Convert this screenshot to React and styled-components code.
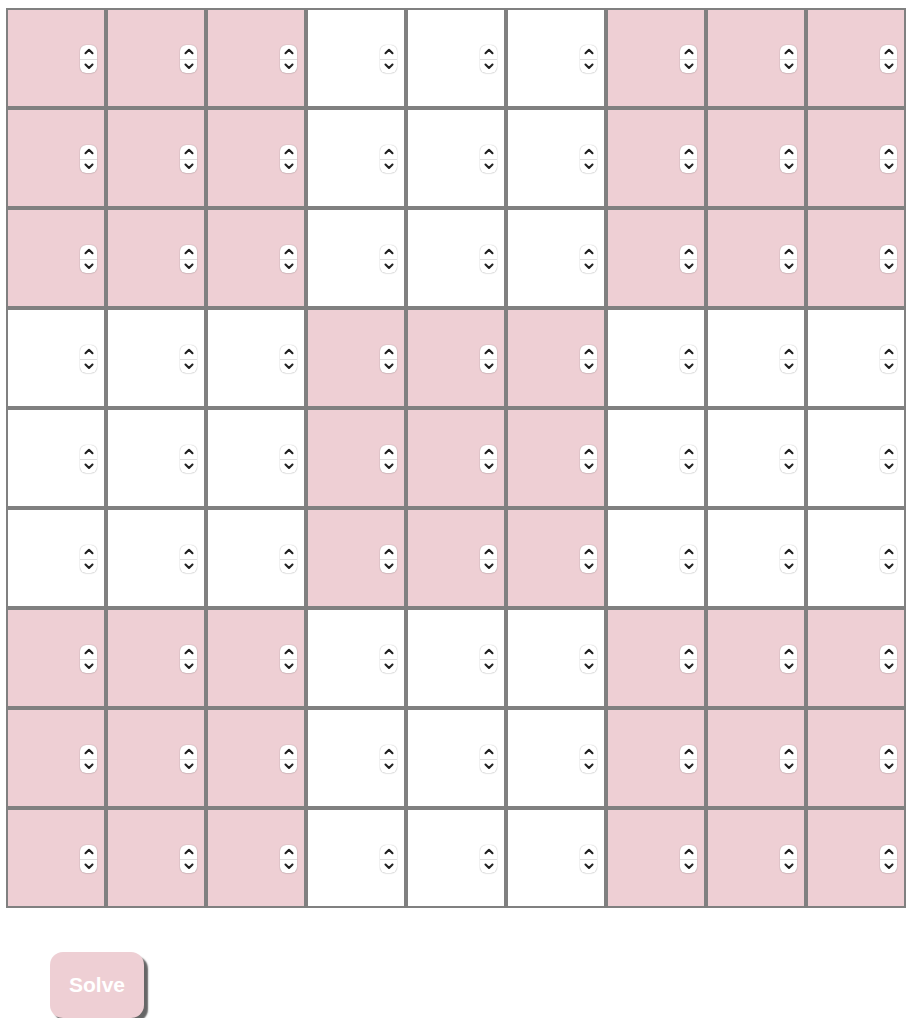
import React from "react";
import styled, { createGlobalStyle } from "styled-components";

const GlobalStyle = createGlobalStyle`
  html, body { margin: 0; padding: 0; background: #ffffff; }
  body { font-family: "Liberation Sans", Arial, sans-serif; }
  input[type=number]::-webkit-inner-spin-button,
  input[type=number]::-webkit-outer-spin-button { -webkit-appearance: none; margin: 0; }
  input[type=number] { -moz-appearance: textfield; }
`;

const Page = styled.div`
  padding: 8px 0 0 6px;
  display: flex;
  flex-direction: column;
  align-items: flex-start;
`;

const Board = styled.div`
  display: grid;
  grid-template-columns: repeat(9, 100px);
  grid-auto-rows: 100px;
`;

const Cell = styled.label`
  box-sizing: border-box;
  border: 2px solid #808080;
  background: ${(p) => (p.$shaded ? "#eecfd4" : "#ffffff")};
  display: flex;
  align-items: center;
  padding: 2px 7px 0 0;
`;

const NumberField = styled.input`
  flex: 1;
  min-width: 0;
  height: 100%;
  border: none;
  outline: none;
  background: transparent;
  font-family: "Liberation Sans", Arial, sans-serif;
  font-size: 20px;
  text-align: center;
  padding: 0;
`;

const Spinner = styled.span`
  width: 17px;
  height: 28px;
  flex: none;
  border-radius: 6px;
  background: #ffffff;
  box-shadow: 0 0 1px rgba(0, 0, 0, 0.3), 0 0.5px 1.5px rgba(0, 0, 0, 0.14);
  display: flex;
  flex-direction: column;
  overflow: hidden;
`;

const SpinHalf = styled.span`
  flex: 1;
  display: flex;
  align-items: center;
  justify-content: center;
  border-top: ${(p) => (p.$lower ? "1px solid #dcdcdc" : "none")};
`;

const Chevron = ({ down }) => (
  <svg width="10" height="7" viewBox="0 0 10 7">
    <path
      d={down ? "M1.5 1.6 L5 5 L8.5 1.6" : "M1.5 5.2 L5 1.8 L8.5 5.2"}
      fill="none"
      stroke="#222222"
      strokeWidth="2.1"
      strokeLinecap="round"
      strokeLinejoin="round"
    />
  </svg>
);

const SolveButton = styled.button`
  margin: 44px 0 0 44px;
  width: 94px;
  height: 66px;
  border: none;
  border-radius: 13px;
  background: #eecfd4;
  color: #ffffff;
  font-family: "Liberation Sans", Arial, sans-serif;
  font-weight: 700;
  font-size: 21px;
  box-shadow: 4px 4px 1.5px #666666;
  cursor: pointer;
`;

export default function App() {
  const cells = [];
  for (let r = 0; r < 9; r++) {
    for (let c = 0; c < 9; c++) {
      const shaded = (Math.floor(r / 3) + Math.floor(c / 3)) % 2 === 0;
      cells.push(
        <Cell key={`${r}-${c}`} $shaded={shaded}>
          <NumberField type="number" min="1" max="9" />
          <Spinner aria-hidden="true">
            <SpinHalf>
              <Chevron />
            </SpinHalf>
            <SpinHalf $lower>
              <Chevron down />
            </SpinHalf>
          </Spinner>
        </Cell>
      );
    }
  }
  return (
    <>
      <GlobalStyle />
      <Page>
        <Board>{cells}</Board>
        <SolveButton>Solve</SolveButton>
      </Page>
    </>
  );
}
